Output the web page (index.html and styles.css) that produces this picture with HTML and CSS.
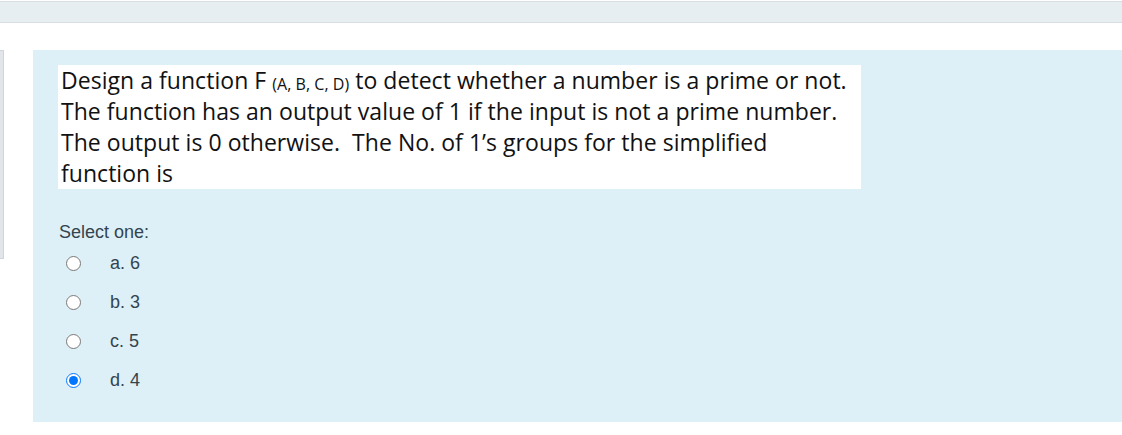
FILE: index.html
```html
<!DOCTYPE html>
<html lang="en">
<head>
  <meta charset="UTF-8">
  <title>Question</title>
  <link rel="stylesheet" href="styles.css">
</head>
<body>
  <div class="topbar"></div>

  <div class="page">
    <div class="sidebar"></div>

    <div class="formulation">
      <div class="qtext">
        Design a function F <sub>(A, B, C, D)</sub> to detect whether a number is a prime or not.<br>
        The function has an output value of 1 if the input is not a prime number.<br>
        The output is 0 otherwise.&nbsp; The No. of 1&rsquo;s groups for the simplified<br>
        function is
      </div>

      <div class="ablock">
        <div class="prompt">Select one:</div>
        <div class="answer">
          <label class="option"><input type="radio" name="q1"><span>a. 6</span></label>
          <label class="option"><input type="radio" name="q1"><span>b. 3</span></label>
          <label class="option"><input type="radio" name="q1"><span>c. 5</span></label>
          <label class="option"><input type="radio" name="q1" checked><span>d. 4</span></label>
        </div>
      </div>
    </div>
  </div>
</body>
</html>
```

FILE: styles.css
```css
body {
  margin: 0;
  font-family: "Liberation Sans", Arial, sans-serif;
  background-color: #fff;
}

.topbar {
  margin-top: 1px;
  height: 20px;
  background-color: #e7eef2;
  border-top: 1px solid #d9dee3;
  border-bottom: 1px solid #d9dee3;
}

.page {
  display: flex;
  align-items: flex-start;
  margin-top: 27px;
}

.sidebar {
  width: 3px;
  height: 207px;
  background-color: #e2e6eb;
  border: 1px solid #cfd5db;
  border-left: none;
}

.formulation {
  flex: 1;
  margin-left: 29px;
  height: 372px;
  box-sizing: border-box;
  padding: 15px 0 0 25px;
  background-color: #def0f7;
}

.qtext {
  display: inline-block;
  background-color: #fff;
  padding: 0 14px 0 3px;
  font-family: "Open Sans", sans-serif;
  font-size: 23px;
  letter-spacing: 0.04px;
  line-height: 31px;
  color: #111;
}

.qtext sub {
  font-size: 16px;
  line-height: 0;
  vertical-align: -1px;
}

.ablock {
  margin-top: 33px;
  color: #33444f;
  font-size: 18px;
}

.prompt {
  margin-left: 1px;
}

.answer {
  margin-top: 1px;
}

.option {
  display: flex;
  align-items: center;
  height: 39px;
}

.option input {
  width: 15px;
  height: 15px;
  margin: 0 29px 0 8px;
}
```
